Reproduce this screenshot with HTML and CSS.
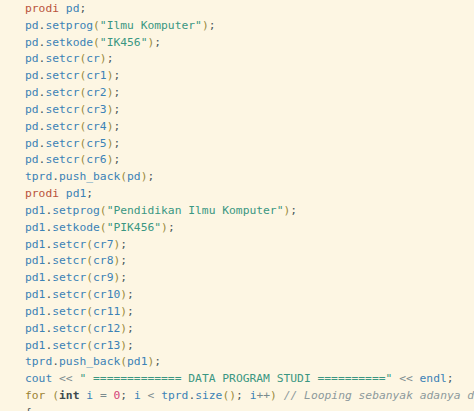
FILE: index.html
```html
<!DOCTYPE html>
<html>
<head>
<meta charset="utf-8">
<link rel="stylesheet" href="styles.css">
</head>
<body>
<pre class="code"><span class="t">prodi</span> <span class="v">pd</span><span class="p">;</span>
<span class="v">pd</span><span class="p">.</span><span class="v">setprog</span><span class="b">(</span><span class="s">"Ilmu Komputer"</span><span class="b">)</span><span class="p">;</span>
<span class="v">pd</span><span class="p">.</span><span class="v">setkode</span><span class="b">(</span><span class="s">"IK456"</span><span class="b">)</span><span class="p">;</span>
<span class="v">pd</span><span class="p">.</span><span class="v">setcr</span><span class="b">(</span><span class="v">cr</span><span class="b">)</span><span class="p">;</span>
<span class="v">pd</span><span class="p">.</span><span class="v">setcr</span><span class="b">(</span><span class="v">cr1</span><span class="b">)</span><span class="p">;</span>
<span class="v">pd</span><span class="p">.</span><span class="v">setcr</span><span class="b">(</span><span class="v">cr2</span><span class="b">)</span><span class="p">;</span>
<span class="v">pd</span><span class="p">.</span><span class="v">setcr</span><span class="b">(</span><span class="v">cr3</span><span class="b">)</span><span class="p">;</span>
<span class="v">pd</span><span class="p">.</span><span class="v">setcr</span><span class="b">(</span><span class="v">cr4</span><span class="b">)</span><span class="p">;</span>
<span class="v">pd</span><span class="p">.</span><span class="v">setcr</span><span class="b">(</span><span class="v">cr5</span><span class="b">)</span><span class="p">;</span>
<span class="v">pd</span><span class="p">.</span><span class="v">setcr</span><span class="b">(</span><span class="v">cr6</span><span class="b">)</span><span class="p">;</span>
<span class="v">tprd</span><span class="p">.</span><span class="v">push_back</span><span class="b">(</span><span class="v">pd</span><span class="b">)</span><span class="p">;</span>
<span class="t">prodi</span> <span class="v">pd1</span><span class="p">;</span>
<span class="v">pd1</span><span class="p">.</span><span class="v">setprog</span><span class="b">(</span><span class="s">"Pendidikan Ilmu Komputer"</span><span class="b">)</span><span class="p">;</span>
<span class="v">pd1</span><span class="p">.</span><span class="v">setkode</span><span class="b">(</span><span class="s">"PIK456"</span><span class="b">)</span><span class="p">;</span>
<span class="v">pd1</span><span class="p">.</span><span class="v">setcr</span><span class="b">(</span><span class="v">cr7</span><span class="b">)</span><span class="p">;</span>
<span class="v">pd1</span><span class="p">.</span><span class="v">setcr</span><span class="b">(</span><span class="v">cr8</span><span class="b">)</span><span class="p">;</span>
<span class="v">pd1</span><span class="p">.</span><span class="v">setcr</span><span class="b">(</span><span class="v">cr9</span><span class="b">)</span><span class="p">;</span>
<span class="v">pd1</span><span class="p">.</span><span class="v">setcr</span><span class="b">(</span><span class="v">cr10</span><span class="b">)</span><span class="p">;</span>
<span class="v">pd1</span><span class="p">.</span><span class="v">setcr</span><span class="b">(</span><span class="v">cr11</span><span class="b">)</span><span class="p">;</span>
<span class="v">pd1</span><span class="p">.</span><span class="v">setcr</span><span class="b">(</span><span class="v">cr12</span><span class="b">)</span><span class="p">;</span>
<span class="v">pd1</span><span class="p">.</span><span class="v">setcr</span><span class="b">(</span><span class="v">cr13</span><span class="b">)</span><span class="p">;</span>
<span class="v">tprd</span><span class="p">.</span><span class="v">push_back</span><span class="b">(</span><span class="v">pd1</span><span class="b">)</span><span class="p">;</span>
<span class="v">cout</span> <span class="o">&lt;&lt;</span> <span class="s">" ============= DATA PROGRAM STUDI =========="</span> <span class="o">&lt;&lt;</span> <span class="v">endl</span><span class="p">;</span>
<span class="k">for</span> <span class="b">(</span><span class="kb">int</span> <span class="v">i</span> <span class="o">=</span> <span class="n">0</span><span class="p">;</span> <span class="v">i</span> <span class="o">&lt;</span> <span class="v">tprd</span><span class="p">.</span><span class="v">size</span><span class="b">()</span><span class="p">;</span> <span class="v">i</span><span class="o">++</span><span class="b">)</span> <span class="c">// Looping sebanyak adanya data</span>
<span class="p">{</span></pre>
</body>
</html>
```
FILE: styles.css
```css
html, body {
  margin: 0;
  padding: 0;
  background: #fdf6e3;
  overflow: hidden;
}
.code {
  margin: 1px 0 0 0;
  padding: 0 0 0 25px;
  font-family: "DejaVu Sans Mono", "Liberation Mono", monospace;
  font-size: 11.3px;
  line-height: 16.83px;
  color: #586e75;
  white-space: pre;
}
.t { color: #b9533c; }
.v { color: #3b82b6; }
.p { color: #4d5a5e; }
.b { color: #9a8a3c; }
.s { color: #3a9682; }
.o { color: #7a8a8e; }
.k { color: #9a8232; }
.kb { color: #3e4a4e; font-weight: bold; }
.n { color: #d3447a; }
.c { color: #8d9a9c; font-style: italic; }
```
